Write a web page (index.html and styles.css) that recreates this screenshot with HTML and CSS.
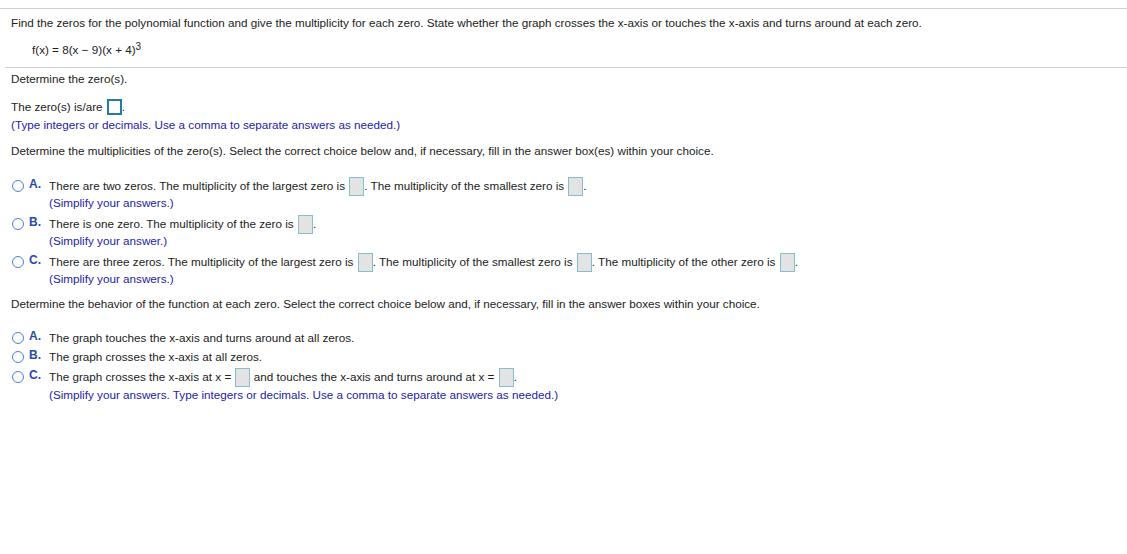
FILE: index.html
```html
<!DOCTYPE html>
<html>
<head>
<meta charset="utf-8">
<link rel="stylesheet" href="styles.css">
</head>
<body>
<div class="question">
  <p class="prompt">Find the zeros for the polynomial function and give the multiplicity for each zero. State whether the graph crosses the x-axis or touches the x-axis and turns around at each zero.</p>
  <p class="formula">f(x) = 8(x − 9)(x + 4)<sup>3</sup></p>
</div>
<div class="answer">
  <p class="step">Determine the zero(s).</p>
  <p class="zeros">The zero(s) is/are <span class="box-active"></span>.</p>
  <p class="hint">(Type integers or decimals. Use a comma to separate answers as needed.)</p>
  <p class="step mult">Determine the multiplicities of the zero(s). Select the correct choice below and, if necessary, fill in the answer box(es) within your choice.</p>

  <div class="options group1">
    <div class="option">
      <span class="radio"></span><span class="label">A.</span>
      <div class="body">
        <div class="main">There are two zeros. The multiplicity of the largest zero is <span class="box"></span>. The multiplicity of the smallest zero is <span class="box"></span>.</div>
        <div class="hint">(Simplify your answers.)</div>
      </div>
    </div>
    <div class="option">
      <span class="radio"></span><span class="label">B.</span>
      <div class="body">
        <div class="main">There is one zero. The multiplicity of the zero is <span class="box"></span>.</div>
        <div class="hint">(Simplify your answer.)</div>
      </div>
    </div>
    <div class="option">
      <span class="radio"></span><span class="label">C.</span>
      <div class="body">
        <div class="main">There are three zeros. The multiplicity of the largest zero is <span class="box"></span>. The multiplicity of the smallest zero is <span class="box"></span>. The multiplicity of the other zero is <span class="box"></span>.</div>
        <div class="hint">(Simplify your answers.)</div>
      </div>
    </div>
  </div>

  <p class="step behav">Determine the behavior of the function at each zero. Select the correct choice below and, if necessary, fill in the answer boxes within your choice.</p>

  <div class="options group2">
    <div class="option">
      <span class="radio"></span><span class="label">A.</span>
      <div class="body"><div class="main">The graph touches the x-axis and turns around at all zeros.</div></div>
    </div>
    <div class="option">
      <span class="radio"></span><span class="label">B.</span>
      <div class="body"><div class="main">The graph crosses the x-axis at all zeros.</div></div>
    </div>
    <div class="option last">
      <span class="radio"></span><span class="label">C.</span>
      <div class="body">
        <div class="main">The graph crosses the x-axis at x = <span class="box"></span> and touches the x-axis and turns around at x = <span class="box"></span>.</div>
        <div class="hint">(Simplify your answers. Type integers or decimals. Use a comma to separate answers as needed.)</div>
      </div>
    </div>
  </div>
</div>
</body>
</html>
```

FILE: styles.css
```css
html, body {
  margin: 0;
  padding: 0;
  background: #ffffff;
}
body {
  font-family: "Liberation Sans", Arial, sans-serif;
  font-size: 11.7px;
  color: #222222;
  padding-top: 8px;
}
p {
  margin: 0;
}
.question {
  border-top: 1px solid #c9d0dc;
  padding: 5px 0 8px 11px;
}
.prompt {
  line-height: 18px;
}
.formula {
  line-height: 18px;
  margin-top: 9px;
  padding-left: 21px;
}
.formula sup {
  font-size: 10px;
  line-height: 0;
  vertical-align: 4px;
}
.answer {
  margin-left: 5px;
  border-top: 1px solid #c9d0dc;
  padding: 2px 0 0 6px;
}
.step {
  line-height: 18px;
}
.zeros {
  line-height: 18px;
  margin-top: 10px;
}
.box-active {
  display: inline-block;
  box-sizing: border-box;
  width: 15px;
  height: 16px;
  border: 2px solid #1f7fa0;
  background: #fff;
  vertical-align: -4px;
  margin-left: 1px;
}
.hint {
  color: #2323a8;
  line-height: 18px;
}
.mult {
  margin-top: 8px;
}
.options {
  display: flex;
  flex-direction: column;
}
.group1 {
  margin-top: 17px;
  gap: 4px;
}
.group1 .main {
  line-height: 18px;
}
.group1 .hint {
  line-height: 16px;
}
.option {
  display: flex;
  align-items: flex-start;
}
.radio {
  flex: none;
  box-sizing: border-box;
  width: 12px;
  height: 12px;
  border: 1.5px solid #4a80d8;
  border-radius: 50%;
  margin: 3px 5px 0 1px;
}
.label {
  flex: none;
  width: 20px;
  color: #2a4aa6;
  font-weight: bold;
  font-size: 12px;
  line-height: 14px;
}
.body {
  flex: 1;
}
.box {
  display: inline-block;
  box-sizing: border-box;
  width: 15px;
  height: 19px;
  border: 1px solid #86bdd0;
  background: #e3e3e3;
  vertical-align: -5px;
  margin: -1px 0 -1px 1px;
}
.behav {
  margin-top: 8px;
}
.group2 {
  margin-top: 15px;
}
.group2 .main {
  line-height: 19px;
}
.group2 .hint {
  line-height: 17px;
}
.group2 .radio {
  margin-top: 4px;
}
.group2 .label {
  line-height: 17px;
}
.group2 .last {
  margin-top: 1px;
}
```
